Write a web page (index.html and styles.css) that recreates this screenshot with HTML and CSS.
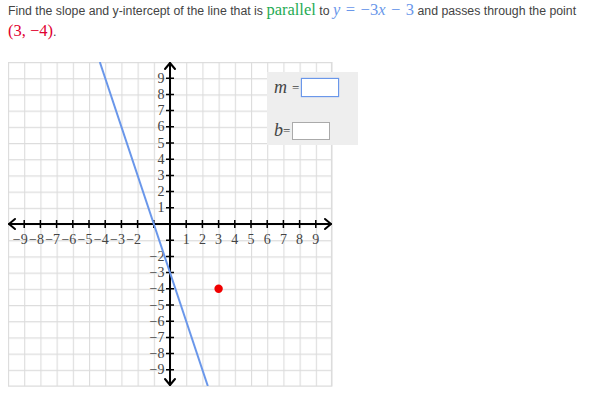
FILE: index.html
```html
<!DOCTYPE html>
<html>
<head>
<meta charset="utf-8">
<link rel="stylesheet" href="styles.css">
</head>
<body>
<div class="page">
  <p class="question">Find the slope and y-intercept of the line that is <span class="m green">parallel</span> to <span class="m blue"><i>y</i><span class="op">=</span>−3<i>x</i><span class="op">−</span>3</span> and passes through the point <span class="m red">(3, −4)</span>.</p>
  <div class="graph-wrap">
    <svg class="graph" width="345" height="345" viewBox="0 0 345 345" xmlns="http://www.w3.org/2000/svg">
      <defs>
        <pattern id="grid" x="8" y="7" width="16.2" height="16.2" patternUnits="userSpaceOnUse">
          <path d="M0.5 0 V16.2 M0 0.5 H16.2" stroke="#dcdcdc" stroke-width="1.2" fill="none"/>
        </pattern>
        <clipPath id="box"><rect x="8" y="7" width="324" height="324"/></clipPath>
      </defs>
      <rect x="8" y="7" width="324.5" height="324.5" fill="url(#grid)"/>
      <path d="M331.5 7 V331.5 M8 331 H332" stroke="#dcdcdc" stroke-width="1.2" fill="none"/>
      <g stroke="#000" stroke-width="2" fill="none" stroke-linecap="round" stroke-linejoin="round">
        <line x1="9" y1="169" x2="331" y2="169"/>
        <line x1="170" y1="8" x2="170" y2="330"/>
        <polyline points="15,164 9,169 15,174"/>
        <polyline points="325,164 331,169 325,174"/>
        <polyline points="165,14 170,8 175,14"/>
        <polyline points="165,324 170,330 175,324"/>
      </g>
      <line x1="23.45" y1="169" x2="317" y2="169" stroke="#000" stroke-width="8" stroke-dasharray="1.5 14.7"/>
      <line x1="170" y1="22.45" x2="170" y2="316" stroke="#000" stroke-width="8" stroke-dasharray="1.5 14.7"/>
      <g class="lbl">
        <text x="27.7" y="189" text-anchor="end">−9</text>
        <text x="43.9" y="189" text-anchor="end">−8</text>
        <text x="60.1" y="189" text-anchor="end">−7</text>
        <text x="76.3" y="189" text-anchor="end">−6</text>
        <text x="92.5" y="189" text-anchor="end">−5</text>
        <text x="108.7" y="189" text-anchor="end">−4</text>
        <text x="124.9" y="189" text-anchor="end">−3</text>
        <text x="141.1" y="189" text-anchor="end">−2</text>
        <text x="186.2" y="189" text-anchor="middle">1</text>
        <text x="202.4" y="189" text-anchor="middle">2</text>
        <text x="218.6" y="189" text-anchor="middle">3</text>
        <text x="234.8" y="189" text-anchor="middle">4</text>
        <text x="251" y="189" text-anchor="middle">5</text>
        <text x="267.2" y="189" text-anchor="middle">6</text>
        <text x="283.4" y="189" text-anchor="middle">7</text>
        <text x="299.6" y="189" text-anchor="middle">8</text>
        <text x="315.8" y="189" text-anchor="middle">9</text>
      </g>
      <g class="lbl" text-anchor="end">
        <text x="164.5" y="27.7">9</text>
        <text x="164.5" y="43.9">8</text>
        <text x="164.5" y="60.1">7</text>
        <text x="164.5" y="76.3">6</text>
        <text x="164.5" y="92.5">5</text>
        <text x="164.5" y="108.7">4</text>
        <text x="164.5" y="124.9">3</text>
        <text x="164.5" y="141.1">2</text>
        <text x="164.5" y="157.3">1</text>
        <text x="164.5" y="205.9">−2</text>
        <text x="164.5" y="222.1">−3</text>
        <text x="164.5" y="238.3">−4</text>
        <text x="164.5" y="254.5">−5</text>
        <text x="164.5" y="270.7">−6</text>
        <text x="164.5" y="286.9">−7</text>
        <text x="164.5" y="303.1">−8</text>
        <text x="164.5" y="319.3">−9</text>
      </g>
      <line x1="99.8" y1="7" x2="207.8" y2="331" stroke="#6a97ea" stroke-width="2" clip-path="url(#box)"/>
      <circle cx="218.6" cy="233.8" r="4.2" fill="#f00000"/>
    </svg>
    <div class="panel">
      <div class="row row-m"><span class="var">m</span><span class="eq">=</span><span class="input focused"></span></div>
      <div class="row row-b"><span class="var">b</span><span class="eq">=</span><span class="input"></span></div>
    </div>
  </div>
</div>
</body>
</html>
```
FILE: styles.css
```css
html, body {
  margin: 0;
  padding: 0;
  background: #fff;
}
.page {
  padding: 1px 8px 0 8px;
}
.question {
  margin: 0;
  font-family: "Liberation Sans", Arial, sans-serif;
  font-size: 12.3px;
  line-height: 21px;
  color: #444;
}
.m {
  font-family: "Liberation Serif", "DejaVu Serif", serif;
  font-size: 16.5px;
  line-height: 0;
}
.op {
  margin: 0 5.5px;
}
.green { color: #1fab54; }
.blue { color: #6a97ea; }
.red { color: #df0030; }
.graph-wrap {
  position: relative;
  margin: 12px 0 0 -8px;
  width: 370px;
  height: 345px;
}
.graph {
  display: block;
}
.lbl {
  font-family: "Liberation Serif", "DejaVu Serif", serif;
  font-size: 14px;
  fill: #444;
}
.panel {
  position: absolute;
  left: 267px;
  top: 17px;
  width: 91px;
  height: 73px;
  background: #eeeeee;
  box-sizing: border-box;
  padding-top: 5px;
  display: flex;
  flex-direction: column;
  gap: 22px;
}
.row {
  display: flex;
  align-items: center;
  font-family: "Liberation Serif", "DejaVu Serif", serif;
  color: #444;
}
.row-m { padding-left: 7px; }
.row-b { padding-left: 7px; }
.var {
  font-style: italic;
  font-size: 18px;
}
.row-m .var { width: 18px; }
.row-b .var { width: 9px; }
.eq {
  font-size: 13px;
  margin-right: 2px;
  width: 7px;
}
.input {
  display: block;
  width: 38px;
  height: 18px;
  box-sizing: border-box;
  border: 1px solid #aaa;
  background: #fff;
}
.input.focused {
  height: 19px;
  border: 1px solid #6a97ea;
  box-shadow: 0 0 1px #6a97ea;
}
```
